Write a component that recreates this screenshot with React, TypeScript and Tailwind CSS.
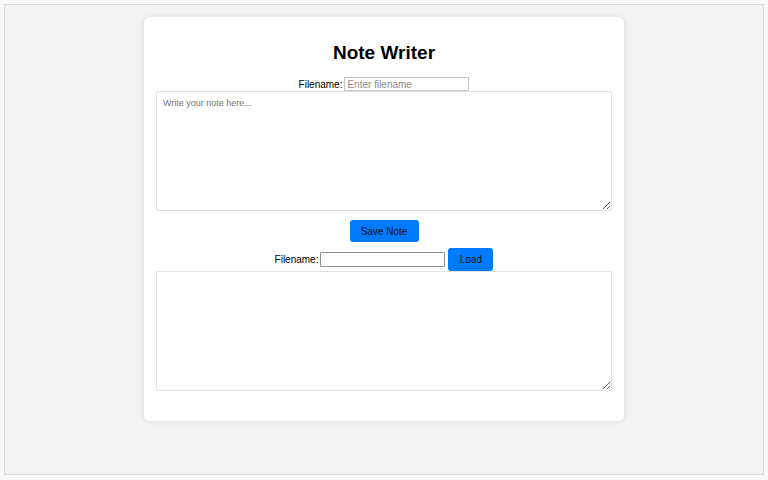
import React, { useState } from 'react';

export default function App() {
  const [filename, setFilename] = useState('');
  const [note, setNote] = useState('');
  const [loadName, setLoadName] = useState('');
  const [loaded, setLoaded] = useState('');

  const saveNote = () => {
    if (!filename) return;
    localStorage.setItem('note:' + filename, note);
  };

  const loadNote = () => {
    setLoaded(localStorage.getItem('note:' + loadName) || '');
  };

  return (
    <div className="w-[768px] h-[480px] bg-[#f8f8f8] p-[4px] font-['Liberation_Sans',Arial,sans-serif] text-black">
      <div className="h-[471px] border border-[#dcdcdc] bg-[#f3f3f3] pt-[12px]">
        <div className="mx-auto w-[480px] h-[404px] bg-white rounded-[6px] shadow-[0_0_6px_rgba(0,0,0,0.1)] px-[12px] pt-[24px] flex flex-col">
          <h1 className="text-[19px] leading-[24px] font-bold text-center">Note Writer</h1>

          <div className="mt-[12px] flex justify-center items-center h-[14px] text-[10px]">
            <label htmlFor="fn" className="mr-[2px]">Filename:</label>
            <input
              id="fn"
              value={filename}
              onChange={(e) => setFilename(e.target.value)}
              placeholder="Enter filename"
              className="w-[125px] h-[14px] border border-[#c4c4c4] px-[2px] text-[10px] placeholder:text-[#8a8a8a] outline-none"
            />
          </div>

          <textarea
            value={note}
            onChange={(e) => setNote(e.target.value)}
            placeholder="Write your note here..."
            className="w-[456px] h-[120px] border border-[#e2e2e2] rounded-[2px] px-[6px] py-[5px] text-[9px] placeholder:text-[#777] outline-none"
          />

          <div className="mt-[9px] flex justify-center">
            <button
              onClick={saveNote}
              className="w-[69px] h-[22px] bg-[#007bff] rounded-[3px] text-[10px] text-[#111]"
            >
              Save Note
            </button>
          </div>

          <div className="mt-[6px] flex justify-center items-center h-[23px] text-[10px]">
            <label htmlFor="ln" className="mr-[2px]">Filename:</label>
            <input
              id="ln"
              value={loadName}
              onChange={(e) => setLoadName(e.target.value)}
              className="w-[125px] h-[15px] border border-[#8f8f8f] rounded-[1px] px-[2px] text-[10px] outline-none"
            />
            <button
              onClick={loadNote}
              className="ml-[3px] w-[45px] h-[23px] bg-[#007bff] rounded-[3px] text-[10px] text-[#111]"
            >
              Load
            </button>
          </div>

          <textarea
            value={loaded}
            readOnly
            className="w-[456px] h-[120px] border border-[#e2e2e2] rounded-[2px] px-[6px] py-[5px] text-[9px] outline-none"
          />
        </div>
      </div>
    </div>
  );
}
